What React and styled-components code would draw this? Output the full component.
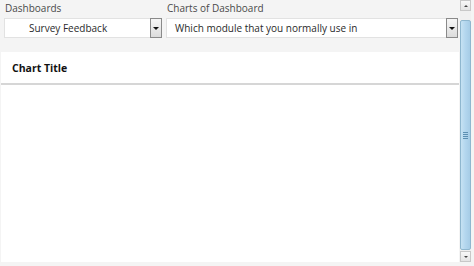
import React from 'react';
import styled, { createGlobalStyle } from 'styled-components';

const Global = createGlobalStyle`
  html, body { margin: 0; padding: 0; background: #f4f4f4; }
  body { font-family: "Open Sans", "Noto Sans", sans-serif; }
`;

const Page = styled.div`
  display: flex;
  width: 474px;
  height: 262px;
  padding-bottom: 4px;
  background: #f4f4f4;
`;

const Main = styled.div`
  flex: 1;
  display: flex;
  flex-direction: column;
  min-width: 0;
`;

const Toolbar = styled.div`
  display: flex;
  gap: 4px;
  height: 52px;
  padding: 0 0 0 4px;
  box-sizing: border-box;
`;

const Field = styled.div`
  display: flex;
  flex-direction: column;
  width: ${p => p.w}px;
`;

const Label = styled.div`
  font-size: 10px;
  color: #4a4a4a;
  height: 18px;
  line-height: 17px;
  padding-left: 1px;
`;

const Select = styled.div`
  display: flex;
  height: 20px;
`;

const Value = styled.div`
  flex: 1;
  background: #fff;
  border: 1px solid #e2e2e2;
  border-right: none;
  font-size: 10px;
  color: #2a2a2a;
  line-height: 18px;
  padding-left: ${p => p.indent}px;
  white-space: nowrap;
  overflow: hidden;
`;

const ArrowBtn = styled.div`
  width: 10px;
  border: 1px solid #8a8a8a;
  background: linear-gradient(#f6f6f6, #dcdcdc);
  display: flex;
  align-items: center;
  justify-content: center;
`;

const Caret = styled.div`
  width: 0;
  height: 0;
  border-left: 3px solid transparent;
  border-right: 3px solid transparent;
  border-top: 3px solid #111;
`;

const ChartPanel = styled.div`
  flex: 1;
  background: #fff;
  display: flex;
  flex-direction: column;
  margin-left: 1px;
`;

const ChartHeader = styled.div`
  height: 31px;
  border-bottom: 2px solid #d6d6d6;
  font-size: 10.5px;
  font-weight: 700;
  color: #111;
  padding-left: 11px;
  line-height: 32px;
`;

const Scrollbar = styled.div`
  width: 11px;
  margin: 0 3px 0 1px;
  display: flex;
  flex-direction: column;
  background: #f0f0f0;
`;

const ScrollBtn = styled.div`
  height: 9px;
  display: flex;
  align-items: center;
  justify-content: center;
  background: linear-gradient(#f8f8f8, #e4e4e4);
  border: 1px solid #c8c8c8;
`;

const SmallCaret = styled.div`
  width: 0;
  height: 0;
  border-left: 2px solid transparent;
  border-right: 2px solid transparent;
  ${p => (p.up ? 'border-bottom: 2px solid #444;' : 'border-top: 2px solid #444;')}
`;

const Track = styled.div`
  flex: 1;
  padding: 9px 0 1px;
  display: flex;
`;

const Thumb = styled.div`
  flex: 1;
  border: 1px solid #8fb7cf;
  border-radius: 2px;
  background: linear-gradient(90deg, #c6e2f3, #b3d6ee 50%, #a6cce6);
  display: flex;
  align-items: center;
  justify-content: center;
`;

const Grip = styled.div`
  width: 5px;
  height: 7px;
  background: repeating-linear-gradient(#5d8fb2 0 1px, transparent 1px 2px);
`;

export default function App() {
  return (
    <>
      <Global />
      <Page>
        <Main>
          <Toolbar>
            <Field w={158}>
              <Label>Dashboards</Label>
              <Select>
                <Value indent={24}>Survey Feedback</Value>
                <ArrowBtn><Caret /></ArrowBtn>
              </Select>
            </Field>
            <Field w={292}>
              <Label>Charts of Dashboard</Label>
              <Select>
                <Value indent={8}>Which module that you normally use in</Value>
                <ArrowBtn><Caret /></ArrowBtn>
              </Select>
            </Field>
          </Toolbar>
          <ChartPanel>
            <ChartHeader>Chart Title</ChartHeader>
          </ChartPanel>
        </Main>
        <Scrollbar>
          <ScrollBtn><SmallCaret up /></ScrollBtn>
          <Track>
            <Thumb><Grip /></Thumb>
          </Track>
          <ScrollBtn><SmallCaret /></ScrollBtn>
        </Scrollbar>
      </Page>
    </>
  );
}
